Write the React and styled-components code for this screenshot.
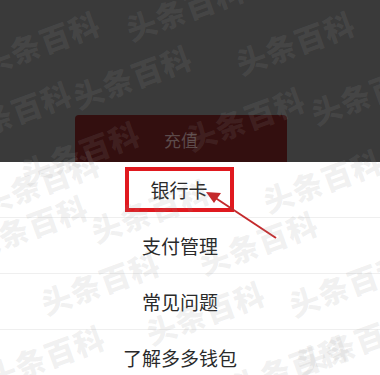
import styled, { createGlobalStyle } from "styled-components";

const GlobalStyle = createGlobalStyle`
  html, body {
    margin: 0;
    padding: 0;
    background: #3a3a3a;
  }
  body {
    font-family: "Noto Sans CJK SC", "Noto Sans", sans-serif;
  }
`;

const MENU = ["银行卡", "支付管理", "常见问题", "了解多多钱包"];

// watermark centres, roughly on a diagonal grid
const MARKS = [
  [185, 8], [40, 42], [295, 42], [132, 76], [370, 92], [12, 112],
  [245, 118], [80, 152], [40, 182], [322, 180], [28, 226], [150, 210],
  [258, 242], [100, 282], [348, 284], [205, 312], [355, 342], [45, 356],
  [290, 366],
];

const App = () => {
  return (
    <>
      <GlobalStyle />
      <Page>
        <Backdrop>
          <RechargeButton>充值</RechargeButton>
        </Backdrop>
        <Sheet>
          {MENU.map((label, i) => (
            <Row key={label}>
              {i === 0 ? <Highlight>{label}</Highlight> : label}
            </Row>
          ))}
        </Sheet>

        <Arrow width="380" height="375" viewBox="0 0 380 375">
          <line x1="276" y1="238" x2="214" y2="197" stroke="#c42a2c" strokeWidth="2" />
          <polygon points="206,192 221,193 214,203" fill="#c42a2c" />
        </Arrow>

        {MARKS.map(([x, y], i) => (
          <Watermark key={i} $x={x} $y={y}>
            头条百科
          </Watermark>
        ))}
      </Page>
    </>
  );
};

const Page = styled.div`
  position: relative;
  width: 380px;
  height: 375px;
  overflow: hidden;
  display: flex;
  flex-direction: column;
  background: #3a3a3a;
`;

const Backdrop = styled.div`
  height: 162px;
  flex-shrink: 0;
  display: flex;
  justify-content: center;
  align-items: flex-end;
  padding-right: 18px;
`;

const RechargeButton = styled.div`
  width: 212px;
  height: 47px;
  background: #330f0f;
  border-radius: 4px 4px 0 0;
  color: #5c4a4a;
  font-size: 17px;
  line-height: 50px;
  text-align: center;
`;

const Sheet = styled.div`
  flex: 1;
  background: #fff;
`;

const Row = styled.div`
  height: 56px;
  box-sizing: border-box;
  border-bottom: 1px solid #efefef;
  display: flex;
  align-items: center;
  justify-content: center;
  padding-right: 20px;
  font-size: 19px;
  color: #2a2a2a;
`;

const Highlight = styled.span`
  box-sizing: border-box;
  width: 109px;
  height: 45px;
  border: 4px solid #e0191f;
  display: flex;
  align-items: center;
  justify-content: center;
  margin-right: 2px;
`;

const Arrow = styled.svg`
  position: absolute;
  left: 0;
  top: 0;
  pointer-events: none;
`;

const Watermark = styled.span`
  position: absolute;
  left: ${(p) => p.$x}px;
  top: ${(p) => p.$y}px;
  transform: translate(-50%, -50%) rotate(-20deg);
  font-size: 30px;
  font-weight: 900;
  letter-spacing: 1px;
  white-space: nowrap;
  color: rgba(150, 150, 150, 0.14);
  pointer-events: none;
`;

export default App;
